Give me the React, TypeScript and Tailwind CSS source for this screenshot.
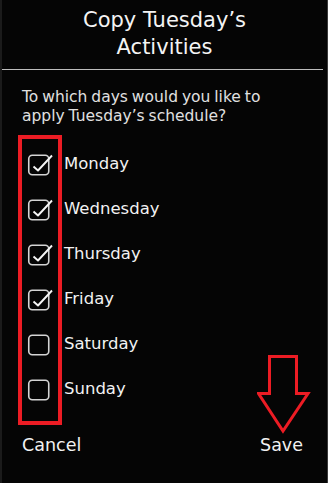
import React from "react";

interface Day {
  name: string;
  checked: boolean;
}

const days: Day[] = [
  { name: "Monday", checked: true },
  { name: "Wednesday", checked: true },
  { name: "Thursday", checked: true },
  { name: "Friday", checked: true },
  { name: "Saturday", checked: false },
  { name: "Sunday", checked: false },
];

function CheckBox({ checked }: { checked: boolean }) {
  return (
    <svg width="27" height="23" viewBox="0 0 27 23" className="shrink-0">
      <rect x="1.75" y="2.25" width="20" height="19.5" rx="3.5" fill="none" stroke="#d4d4d4" strokeWidth="1.6" />
      {checked && (
        <path d="M6.5 13.5 L11 17.5 L25 2.5" fill="none" stroke="#f5f5f5" strokeWidth="1.9" strokeLinejoin="round" />
      )}
    </svg>
  );
}

function DownArrow() {
  return (
    <svg width="54" height="80" viewBox="0 0 54 80" className="absolute right-[16px] top-[-77px]">
      <path
        d="M12.5 1.5 H39.5 V38.5 H51 L26 76 L1.5 38.5 H12.5 Z"
        fill="none"
        stroke="#ec1c24"
        strokeWidth="3"
        strokeLinejoin="miter"
      />
    </svg>
  );
}

export default function App() {
  return (
    <div
      className="w-[328px] h-[483px] bg-[#050505] text-white flex flex-col border-l-2 border-r border-l-[#1b1b1b] border-r-[#3a3a3a] overflow-hidden"
      style={{ fontFamily: '"DejaVu Sans", sans-serif' }}
    >
      <div className="pt-[7px] text-center text-[21px] leading-[27px] text-[#f4f4f4]">
        <p>Copy Tuesday’s</p>
        <p>Activities</p>
      </div>
      <div className="mt-[8px] mr-[4px] h-px bg-[#bdbdbd]" />
      <p className="mt-[18px] pl-[20px] pr-[8px] text-[15.5px] leading-[19px] text-[#e0e0e0] [word-spacing:-1px]">
        To which days would you like to
        <br />
        apply Tuesday’s schedule?
      </p>
      <div className="relative mt-[16px]">
        <div className="absolute left-[16px] top-[-7px] w-[44px] h-[290px] border-4 border-[#ec1c24]" />
        {days.map((d) => (
          <div key={d.name} className="h-[45px] flex items-center pl-[25px] gap-[10px]">
            <CheckBox checked={d.checked} />
            <span className="text-[16.5px] text-[#f2f2f2] -mt-px">{d.name}</span>
          </div>
        ))}
      </div>
      <div className="relative mt-[20px] flex justify-between pl-[20px] pr-[24px] text-[17.5px] text-[#f2f2f2]">
        <span>Cancel</span>
        <span>Save</span>
        <DownArrow />
      </div>
    </div>
  );
}
